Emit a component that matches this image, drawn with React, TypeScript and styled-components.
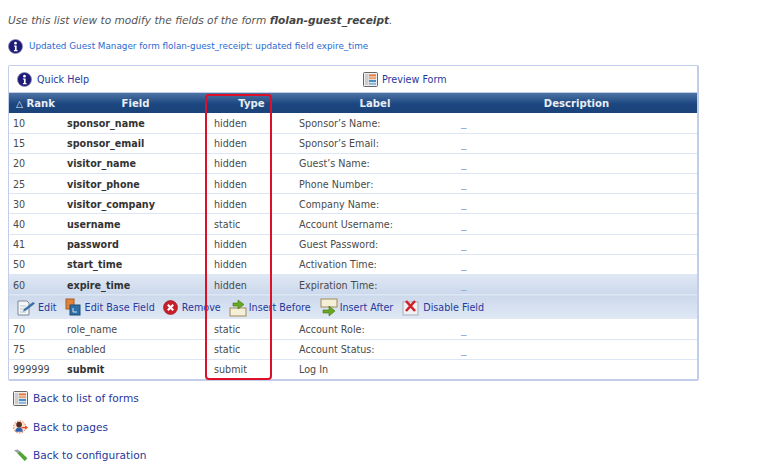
import styled, { createGlobalStyle } from 'styled-components'

const GlobalStyle = createGlobalStyle`
  html, body {
    margin: 0;
    padding: 0;
    background: #fff;
    overflow: hidden;
  }
  body {
    font-family: "DejaVu Sans", Verdana, sans-serif;
    font-size: 10px;
    color: #444;
  }
`

const fields = [
  { rank: '10', name: 'sponsor_name', type: 'hidden', label: 'Sponsor’s Name:', bold: true, dash: true },
  { rank: '15', name: 'sponsor_email', type: 'hidden', label: 'Sponsor’s Email:', bold: true, dash: true },
  { rank: '20', name: 'visitor_name', type: 'hidden', label: 'Guest’s Name:', bold: true, dash: true },
  { rank: '25', name: 'visitor_phone', type: 'hidden', label: 'Phone Number:', bold: true, dash: true },
  { rank: '30', name: 'visitor_company', type: 'hidden', label: 'Company Name:', bold: true, dash: true },
  { rank: '40', name: 'username', type: 'static', label: 'Account Username:', bold: true, dash: true },
  { rank: '41', name: 'password', type: 'hidden', label: 'Guest Password:', bold: true, dash: true },
  { rank: '50', name: 'start_time', type: 'hidden', label: 'Activation Time:', bold: true, dash: true },
  { rank: '60', name: 'expire_time', type: 'hidden', label: 'Expiration Time:', bold: true, dash: true, selected: true },
]

const lowerFields = [
  { rank: '70', name: 'role_name', type: 'static', label: 'Account Role:', bold: false, dash: true },
  { rank: '75', name: 'enabled', type: 'static', label: 'Account Status:', bold: false, dash: true },
  { rank: '999999', name: 'submit', type: 'submit', label: 'Log In', bold: true, dash: false },
]

const InfoIcon = ({ size = 15 }: { size?: number }) => (
  <svg width={size} height={size} viewBox="0 0 16 16">
    <circle cx="8" cy="8" r="7.5" fill="#1d1a78" stroke="#8f8fb8" strokeWidth="0.8" />
    <circle cx="8" cy="4.4" r="1.4" fill="#fff" />
    <path d="M6.3 6.8h2.9v5h1v1.2H6.3v-1.2h1.1V8H6.3z" fill="#fff" />
  </svg>
)

const ListIcon = () => (
  <svg width="15" height="15" viewBox="0 0 15 15">
    <rect x="0.5" y="0.5" width="14" height="14" rx="1" fill="#eee" stroke="#666" />
    <rect x="2" y="2" width="3.5" height="11" fill="#ccc" />
    <rect x="6" y="2.4" width="7" height="2" fill="#e8783a" />
    <rect x="6" y="5.2" width="7" height="2" fill="#e8a070" />
    <rect x="6" y="8" width="7" height="2" fill="#4a90c8" />
    <rect x="6" y="10.8" width="7" height="2" fill="#8ab4d8" />
  </svg>
)

const EditIcon = () => (
  <svg width="19" height="19" viewBox="0 0 19 19">
    <path d="M1 3h9l2 2v12H1z" fill="#f4f6f8" stroke="#7b8796" />
    <path d="M3 8h6M3 11h6M3 14h6" stroke="#b8c2cc" />
    <path d="M7 11l9-7 2 1.500-9 7-3 1z" fill="#3d6ea8" />
  </svg>
)

const BaseFieldIcon = () => (
  <svg width="18" height="18" viewBox="0 0 18 18">
    <rect x="1" y="1" width="8" height="10" fill="#e0823a" stroke="#a85a20" />
    <rect x="5" y="7" width="10" height="10" fill="#2f6fa8" stroke="#1d4c78" />
    <path d="M8 10v4h4" stroke="#cfe3f4" fill="none" />
  </svg>
)

const RemoveIcon = () => (
  <svg width="17" height="15" viewBox="0 0 17 15">
    <circle cx="7.5" cy="7.5" r="7" fill="#c8202a" stroke="#8c1018" strokeWidth="0.6" />
    <path d="M4.800 4.800l5.400 5.400M10.200 4.800l-5.400 5.400" stroke="#fff" strokeWidth="2.2" />
  </svg>
)

const InsertBeforeIcon = () => (
  <svg width="18" height="19" viewBox="0 0 18 19">
    <rect x="1" y="10" width="16" height="8" fill="#f6efd8" stroke="#a08c58" />
    <path d="M4 5h5V2l6 4.500-6 4.500V8H4z" fill="#6aa820" stroke="#3f7010" strokeWidth="0.6" />
  </svg>
)

const InsertAfterIcon = () => (
  <svg width="18" height="19" viewBox="0 0 18 19">
    <rect x="1" y="1" width="16" height="8" fill="#f6efd8" stroke="#a08c58" />
    <path d="M3 12h6V8l6 5-6 5v-3H3z" fill="#6aa820" stroke="#3f7010" strokeWidth="0.6" />
  </svg>
)

const DisableIcon = () => (
  <svg width="19" height="17" viewBox="0 0 19 17">
    <rect x="1" y="3" width="15" height="13" fill="#eef0f4" stroke="#a8adb8" />
    <path d="M4 2l9 10M13 2L4 12" stroke="#d02028" strokeWidth="2.6" />
  </svg>
)

const PagesIcon = () => (
  <svg width="15" height="16" viewBox="0 0 16 16">
    <circle cx="7" cy="8" r="6.500" fill="#fbe3d4" stroke="#e8703a" strokeDasharray="1.500 1.500" />
    <circle cx="6.500" cy="5.500" r="3" fill="#5a2c1c" />
    <path d="M2.500 13c0-3 2-4.500 4-4.500s4 1.500 4 4.500z" fill="#3060b0" />
    <path d="M9 8h4V6l3 2.500-3 2.500V9.300H9z" fill="#e8481c" />
  </svg>
)

const BrushIcon = () => (
  <svg width="15" height="16" viewBox="0 0 16 16">
    <path d="M5 6l2-2 8 7.500-2.500 2.500z" fill="#4ea82c" stroke="#2e7a18" strokeWidth="0.5" />
    <path d="M1 3l4-1 2 2-2 2z" fill="#9aa0a8" />
  </svg>
)

export default function App() {
  return (
    <>
      <GlobalStyle />
      <Page>
        <Intro>
          Use this list view to modify the fields of the form <strong>flolan-guest_receipt</strong>.
        </Intro>
        <Notice>
          <InfoIcon />
          <span>Updated Guest Manager form flolan-guest_receipt: updated field expire_time</span>
        </Notice>
        <Panel>
          <HelpBar>
            <HelpLink><InfoIcon /> Quick Help</HelpLink>
            <PreviewLink><ListIcon /> Preview Form</PreviewLink>
          </HelpBar>
          <Table>
            <colgroup>
              <col style={{ width: 53 }} />
              <col style={{ width: 147 }} />
              <col style={{ width: 85 }} />
              <col style={{ width: 162 }} />
              <col />
            </colgroup>
            <thead>
              <tr>
                <HeadCell><SortMark>△</SortMark> Rank</HeadCell>
                <HeadCell>Field</HeadCell>
                <HeadCell>Type</HeadCell>
                <HeadCell>Label</HeadCell>
                <HeadCell>Description</HeadCell>
              </tr>
            </thead>
            <tbody>
              {fields.map(f => <FieldRow key={f.rank} {...f} />)}
              <tr>
                <ActionCell colSpan={5}>
                  <Actions>
                    <Action $gap={8}><EditIcon />Edit</Action>
                    <Action $gap={8}><BaseFieldIcon />Edit Base Field</Action>
                    <Action $gap={8}><RemoveIcon />Remove</Action>
                    <Action $gap={9}><InsertBeforeIcon />Insert Before</Action>
                    <Action $gap={9}><InsertAfterIcon />Insert After</Action>
                    <Action $gap={0}><DisableIcon />Disable Field</Action>
                  </Actions>
                </ActionCell>
              </tr>
              {lowerFields.map(f => <FieldRow key={f.rank} {...f} />)}
            </tbody>
          </Table>
          <Highlight />
        </Panel>
        <BackLinks>
          <BackLink><ListIcon />Back to list of forms</BackLink>
          <BackLink><PagesIcon />Back to pages</BackLink>
          <BackLink><BrushIcon />Back to configuration</BackLink>
        </BackLinks>
      </Page>
    </>
  )
}

type FieldRowProps = {
  rank: string
  name: string
  type: string
  label: string
  bold: boolean
  dash: boolean
  selected?: boolean
}

const FieldRow = ({ rank, name, type, label, bold, dash, selected }: FieldRowProps) => (
  <Row $selected={selected}>
    <Cell>{rank}</Cell>
    <Cell $bold={bold}>{name}</Cell>
    <Cell>{type}</Cell>
    <Cell>{label}</Cell>
    <Cell>{dash && <Dash>_</Dash>}</Cell>
  </Row>
)

const Page = styled.div`
  width: 768px;
  height: 466px;
  padding: 13px 0 0 8px;
  box-sizing: border-box;
`

const Intro = styled.p`
  margin: 0;
  font-size: 10.6px;
  line-height: 14px;
  font-style: italic;
  color: #555;

  strong {
    font-weight: bold;
    color: #444;
  }
`

const Notice = styled.div`
  display: flex;
  align-items: center;
  gap: 6px;
  height: 16px;
  margin-top: 11px;
  font-size: 8.8px;
  color: #2a6ad0;
`

const Panel = styled.div`
  position: relative;
  width: 691px;
  margin-top: 11px;
  border: 1px solid #c2cdea;
  border-right-width: 2px;
  border-bottom-width: 2px;
  border-radius: 2px;
  box-sizing: border-box;
`

const HelpBar = styled.div`
  display: grid;
  grid-template-columns: 346px 1fr;
  align-items: center;
  height: 26px;
  padding-left: 8px;
  border-bottom: 1px solid #c2cdea;
  font-size: 9.6px;
  color: #27389c;
`

const HelpLink = styled.div`
  display: flex;
  align-items: center;
  gap: 5px;
`

const PreviewLink = styled(HelpLink)`
  gap: 4px;
`

const Table = styled.table`
  width: 100%;
  table-layout: fixed;
  border-collapse: collapse;
`

const HeadCell = styled.th`
  height: 20px;
  padding: 0;
  font-size: 10.1px;
  font-weight: bold;
  color: #e8eef6;
  background: linear-gradient(#4d74a4, #1c4680 55%, #1b4379);
`

const SortMark = styled.span`
  font-size: 9px;
  font-weight: normal;
`

const Row = styled.tr<{ $selected?: boolean }>`
  height: 20.2px;
  border-bottom: 1px solid #dde6f4;
  background: ${p => (p.$selected ? 'linear-gradient(#dfe7f3, #ccd9ec)' : '#fff')};

  &:last-child {
    height: 19.2px;
    border-bottom: none;
  }
`

const Cell = styled.td<{ $bold?: boolean }>`
  padding: 1px 0 0 4px;
  font-size: 9.6px;
  font-weight: ${p => (p.$bold ? 'bold' : 'normal')};
  color: ${p => (p.$bold ? '#333' : '#4a4a4a')};
  white-space: nowrap;
  overflow: hidden;

  &:not(:first-child) {
    padding-left: 5px;
  }
  &:last-child {
    padding-top: 0;
  }
`

const Dash = styled.span`
  font-size: 11px;
  font-weight: bold;
  color: #8fb4e0;
`

const ActionCell = styled.td`
  height: 24px;
  padding: 0;
  background: linear-gradient(#ccd9ec, #e0e8f4);
`

const Actions = styled.div`
  display: flex;
  align-items: center;
  padding-left: 8px;
  font-size: 9.6px;
  color: #27389c;
`

const Action = styled.span<{ $gap: number }>`
  display: flex;
  align-items: center;
  gap: 2px;
  margin-right: ${p => p.$gap}px;
  white-space: nowrap;
`

const Highlight = styled.div`
  position: absolute;
  left: 196px;
  top: 28px;
  width: 67px;
  height: 286px;
  border: 2px solid #dc1028;
  border-radius: 4px;
  box-sizing: border-box;
  pointer-events: none;
`

const BackLinks = styled.nav`
  display: flex;
  flex-direction: column;
  gap: 13.500px;
  margin-top: 10px;
  padding-left: 5px;
`

const BackLink = styled.div`
  display: flex;
  align-items: center;
  gap: 5px;
  height: 15px;
  font-size: 10.6px;
  color: #27389c;
`
